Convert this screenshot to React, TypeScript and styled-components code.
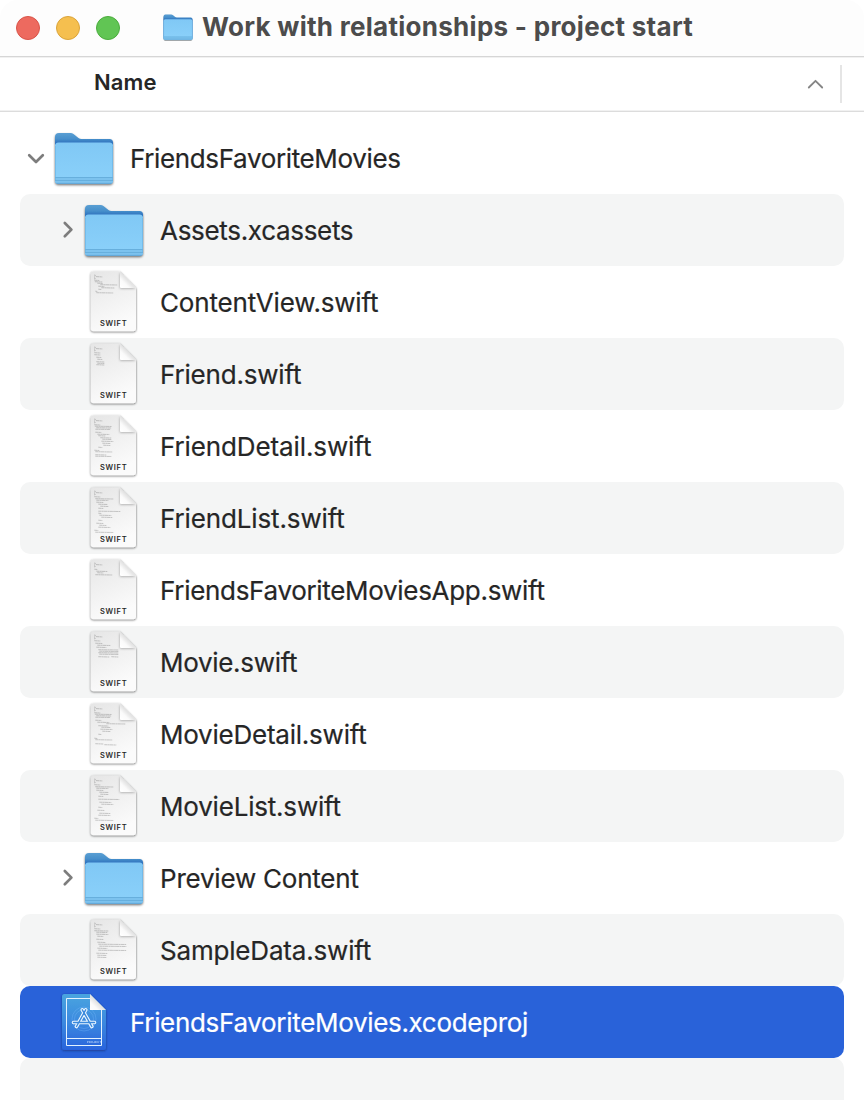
import React from "react";
import styled, { createGlobalStyle } from "styled-components";

const GlobalStyle = createGlobalStyle`
  * { box-sizing: border-box; }
  body { margin: 0; background: #fff; font-family: Inter, "Liberation Sans", sans-serif; }
`;

const Window = styled.main`
  width: 864px;
  height: 1100px;
  overflow: hidden;
  background: #fff;
`;

const TitleBar = styled.header`
  display: flex;
  align-items: center;
  height: 57px;
  padding: 0 16px 1px;
  background: #fdfdfd;
  border-bottom: 1px solid #d6d6d6;
  border-radius: 18px 18px 0 0;
`;

const Lights = styled.div`
  display: flex;
  gap: 16px;
  margin-right: 43px;
`;

const Light = styled.span<{ $fill: string; $edge: string }>`
  width: 24px;
  height: 24px;
  border-radius: 50%;
  background: ${(p) => p.$fill};
  border: 1px solid ${(p) => p.$edge};
`;

const TitleIcon = styled.span`
  display: flex;
  padding-bottom: 2px;
`;

const Title = styled.h1<{ $spacing: number }>`
  margin: 0 0 0 9px;
  padding-bottom: 2px;
  font-size: 26px;
  line-height: 32px;
  font-weight: 700;
  letter-spacing: ${(p) => p.$spacing}px;
  color: #4c4c4c;
  white-space: nowrap;
`;

const ColumnHeader = styled.div`
  display: flex;
  align-items: center;
  height: 55px;
  padding: 0 22px 1px 94px;
  border-top: 1px solid #f1f1f1;
  border-bottom: 1px solid #dcdcdc;
  box-shadow: inset 0 -1px #f1f1f1;
`;

const ColumnName = styled.span`
  flex: 1;
  padding-bottom: 4px;
  font-size: 22px;
  line-height: 28px;
  font-weight: 600;
  letter-spacing: 0.1px;
  color: #262626;
`;

const Divider = styled.span`
  width: 2px;
  height: 38px;
  margin-left: 15px;
  background: #e5e5e5;
`;

const List = styled.div`
  padding: 10px 20px 0;
`;

const Row = styled.div<{ $depth: number; $tone: "plain" | "stripe" | "selected" }>`
  display: flex;
  align-items: center;
  height: 72px;
  padding-left: ${(p) => p.$depth * 30}px;
  border-radius: 10px;
  color: ${(p) => (p.$tone === "selected" ? "#fff" : "#262626")};
  background: ${(p) => ({ plain: "transparent", stripe: "#f4f5f5", selected: "#2962d9" })[p.$tone]};
`;

const Disclosure = styled.span`
  display: flex;
  width: 34px;
  padding-left: 6px;
`;

const FileName = styled.span<{ $spacing: number }>`
  margin-left: 16px;
  padding-top: 2px;
  font-size: 26px;
  line-height: 32px;
  letter-spacing: ${(p) => p.$spacing}px;
  -webkit-text-stroke: 0.2px currentColor;
  white-space: nowrap;
`;

const Drawing = styled.svg`
  display: block;
  flex: none;
  overflow: visible;
`;

const Chevron = ({ open }: { open: boolean }) => (
  <Drawing width="24" height="24" viewBox="0 0 24 24" fill="none" stroke="#7d7d7d" strokeWidth="2.7" strokeLinecap="round" strokeLinejoin="round">
    <path d={open ? "M3.2 9.2L10 16l6.800-6.800" : "M8.800 5L15.400 11.600l-6.600 6.600"} />
  </Drawing>
);

const SortArrow = () => (
  <Drawing width="18" height="12" viewBox="0 0 18 12" fill="none" stroke="#858585" strokeWidth="1.8" strokeLinecap="round" strokeLinejoin="round">
    <path d="M1.800 9.500L8.500 2.800l6.700 6.700" />
  </Drawing>
);

const Folder = ({ small = false }: { small?: boolean }) => (
  <Drawing width={small ? 30 : 60} height={small ? 28 : 56} viewBox="0 0 60 56">
    <defs>
      <linearGradient id="folderBack" gradientUnits="userSpaceOnUse" x1="0" y1="3" x2="0" y2="13">
        <stop offset="0" stopColor="#5a9fd3" />
        <stop offset=".6" stopColor="#468fcb" />
        <stop offset="1" stopColor="#2f72be" />
      </linearGradient>
      <linearGradient id="folderFront" x1="0" y1="0" x2="0" y2="1">
        <stop offset="0" stopColor="#80c8f5" />
        <stop offset="1" stopColor="#8bd1fa" />
      </linearGradient>
      <filter id="folderShadow" x="-10%" y="-10%" width="120%" height="125%">
        <feDropShadow dx="0" dy="1.500" stdDeviation=".8" floodColor="#000" floodOpacity=".6" />
      </filter>
    </defs>
    <path filter="url(#folderShadow)" d="M1 7a4 4 0 0 1 4-4h11.500c4.500 0 6.500 6 11 6H55.500a3.500 3.500 0 0 1 3.500 3.500V50a3.500 3.500 0 0 1-3.500 3.500h-51A3.500 3.500 0 0 1 1 50z" fill="url(#folderBack)" />
    <path d="M1 16a3.500 3.500 0 0 1 3.500-3.500h51A3.500 3.500 0 0 1 59 16v34.300a3.500 3.500 0 0 1-3.500 3.500h-51A3.500 3.500 0 0 1 1 50.300z" fill="url(#folderFront)" />
    <path d="M1 47h58v3.300a3.500 3.500 0 0 1-3.500 3.500h-51A3.500 3.500 0 0 1 1 50.300z" fill="#7cc2ee" />
    <path d="M1 47.500h58M1 50.500h58" stroke="#62a9d8" strokeWidth=".8" />
    <path d="M2.500 53.400h55" stroke="#5a9fd0" strokeWidth=".8" />
    <path d="M1.500 16v34M58.500 16v34" stroke="#68b1e1" strokeWidth=".9" opacity=".7" />
  </Drawing>
);

/* Each entry is [x, y, width] of one line in the page preview. */
type CodeLine = [number, number, number];

const head: CodeLine[] = [[10.5, 5, 1], [11.5, 6.400, 6.500], [10.3, 8, 1]];
const previews: Record<string, CodeLine[]> = {
  content: [...head, [10, 10, 5], [10.500, 11.500, 7.500], [13, 13, 5.500], [16, 14.500, 17], [14, 16, 6], [17, 17.500, 13], [14, 19, 3], [11, 21, 2], [12, 22.500, 17]],
  friend: [...head, [10, 10.500, 6], [10, 12.500, 6], [12, 15, 5], [13, 17, 5], [12, 19.500, 8], [13, 21, 7], [12, 22.500, 8]],
  friendDetail: [...head, [10, 10.500, 6], [10.500, 12, 17], [12, 13.500, 15], [11, 15, 15], [11, 18, 6], [13, 20, 12], [14, 21.500, 7], [16, 23.500, 11], [18, 25, 9], [17, 27, 12], [18, 29, 8], [19, 31, 7], [14, 33, 4], [10, 36, 5], [11, 37.500, 17], [11, 40.500, 11], [11, 42, 16]],
  friendList: [...head, [10, 10.500, 6], [11, 12.500, 18], [12, 14, 12], [12, 16, 7], [14, 18, 9], [16, 20, 8], [14, 22, 5], [14, 25, 22], [14, 27, 3], [15, 29, 12], [17, 31, 11], [14, 34, 4], [12, 37, 7], [15, 39, 7], [14, 41, 12], [10, 44, 4], [11, 46, 18]],
  app: [...head, [10, 11, 3], [12, 13, 11], [13, 14.500, 6], [11, 16.500, 17]],
  movie: [...head, [10, 10.500, 6], [11, 13, 7], [13, 15, 13], [12, 17, 10], [14, 19.500, 20], [15, 21, 19], [14, 22.500, 20], [15, 24, 19], [14, 26.500, 11], [27, 26.500, 7]],
  movieDetail: [...head, [10, 10.500, 6], [10.500, 12, 17], [12, 13.500, 15], [11, 15, 15], [11, 18, 6], [13, 20, 12], [22, 21.500, 19], [14, 23.500, 10], [17, 25, 9], [16, 27, 12], [18, 29, 8], [14, 32, 3], [10, 36, 3], [11, 37.500, 17], [11, 41.500, 8], [20, 42.500, 12]],
  movieList: [...head, [10, 10.500, 6], [11, 12.500, 18], [12, 14, 12], [12, 16, 7], [15, 18, 9], [16, 20, 8], [14, 22, 5], [14, 25, 21], [15, 28, 12], [17, 30, 12], [14, 33, 4], [13, 36, 7], [15, 39, 11], [14, 41, 12], [10, 44, 4], [11, 46, 18]],
  sample: [...head, [10, 10.500, 6], [10, 12.500, 14], [12, 14, 11], [12, 16, 12], [13, 18, 6], [12, 21, 7], [13, 24, 8], [14, 26, 28], [15, 28, 27], [13, 30, 10], [14, 32, 28], [12, 35, 11], [13, 37, 9], [13, 39, 9]],
};

const SwiftPage = ({ preview }: { preview: string }) => (
  <Drawing width="60" height="64" viewBox="0 0 60 64">
    <defs>
      <linearGradient id="page" x1="0" y1="0" x2=".35" y2="1">
        <stop offset="0" stopColor="#e6e6e6" />
        <stop offset="1" stopColor="#fbfbfb" />
      </linearGradient>
      <linearGradient id="fold" gradientUnits="userSpaceOnUse" x1="37" y1="17" x2="44.500" y2="9.500">
        <stop offset="0" stopColor="#fff" />
        <stop offset=".5" stopColor="#fafafa" />
        <stop offset="1" stopColor="#dedede" />
      </linearGradient>
      <filter id="pageShadow" x="-20%" y="-20%" width="140%" height="140%">
        <feDropShadow dx="0" dy=".7" stdDeviation=".9" floodColor="#000" floodOpacity=".65" />
      </filter>
      <filter id="foldShadow" x="-30%" y="-30%" width="160%" height="160%">
        <feDropShadow dx="-.3" dy=".8" stdDeviation="1.200" floodColor="#000" floodOpacity=".28" />
      </filter>
      <clipPath id="pageClip">
        <path d="M9.500 1.800H36L52 18v40.500a2.700 2.700 0 0 1-2.700 2.700H9.500a2.700 2.700 0 0 1-2.700-2.700v-54a2.700 2.700 0 0 1 2.700-2.700z" />
      </clipPath>
    </defs>
    <path filter="url(#pageShadow)" d="M9.500 1.800H36L52 18v40.500a2.700 2.700 0 0 1-2.700 2.700H9.500a2.700 2.700 0 0 1-2.700-2.700v-54a2.700 2.700 0 0 1 2.700-2.700z" fill="url(#page)" />
    <path d="M10.300 4.500v5" stroke="#888" strokeWidth=".6" opacity=".5" />
    <g clipPath="url(#pageClip)">
      {previews[preview].map(([x, y, w], i) => (
        <path key={i} d={`M${x + 0.3} ${y + 0.2}l${w} .3`} stroke="#777" strokeWidth=".85" strokeDasharray="3.400 .3 1.700 .2" opacity=".45" />
      ))}
      <path filter="url(#foldShadow)" d="M36 1.800V16.500a1.500 1.500 0 0 0 1.500 1.500H52z" fill="url(#fold)" />
    </g>
    <text x="29.700" y="56" textAnchor="middle" fontFamily="Inter, sans-serif" fontSize="7.500" fontWeight="500" letterSpacing=".72" fill="#222" stroke="#222" strokeWidth=".1">SWIFT</text>
  </Drawing>
);

const XcodeProject = () => (
  <Drawing width="60" height="64" viewBox="0 0 60 64">
    <defs>
      <linearGradient id="project" x1="0" y1="0" x2="0" y2="1">
        <stop offset="0" stopColor="#49a5df" />
        <stop offset=".55" stopColor="#3a86df" />
        <stop offset="1" stopColor="#2863dc" />
      </linearGradient>
      <linearGradient id="projectFold" gradientUnits="userSpaceOnUse" x1="36" y1="20" x2="44" y2="12">
        <stop offset="0" stopColor="#fff" />
        <stop offset=".5" stopColor="#fafafa" />
        <stop offset="1" stopColor="#dedede" />
      </linearGradient>
      <filter id="projectShadow" x="-20%" y="-20%" width="140%" height="140%">
        <feDropShadow dx="0" dy=".8" stdDeviation=".8" floodColor="#071d55" floodOpacity=".6" />
      </filter>
    </defs>
    <path filter="url(#projectShadow)" d="M10.500 4H36l16 16v37.500a2.500 2.500 0 0 1-2.500 2.500h-39A2.500 2.500 0 0 1 8 57.500v-51A2.500 2.500 0 0 1 10.500 4z" fill="url(#project)" />
    <path d="M36 8.500H12.500V55.500h35V20M12.500 48.500h35" fill="none" stroke="#e3f2ff" strokeWidth="1" />
    <g fill="none" stroke="#7fbfff" strokeWidth=".6" opacity=".5">
      <circle cx="30" cy="29" r="9.500" />
      <circle cx="30" cy="29" r="12" />
    </g>
    <g fill="none" strokeLinecap="round">
      <g stroke="#edf7ff" strokeWidth="3.600">
        <path d="M19.500 32.500h21M31.700 19.800L22.500 36.500M28.300 19.800L37.800 36.500" />
      </g>
      <g stroke="#3b89dc" strokeWidth="1.400">
        <path d="M19.500 32.500h21M31.700 19.800L22.500 36.500M28.300 19.800L37.800 36.500" />
      </g>
    </g>
    <path d="M36 4l16 16H36z" fill="url(#projectFold)" />
    <text x="33" y="53" fontFamily="Inter, sans-serif" fontSize="2.500" fontWeight="700" letterSpacing=".4" fill="#d7e9ff" opacity=".85">PROJECT</text>
  </Drawing>
);

interface Entry {
  name: string;
  depth: number;
  kind: "folder" | "swift" | "project";
  open?: boolean;
  preview?: string;
  spacing: number;
}

const entries: Entry[] = [
  { name: "FriendsFavoriteMovies", depth: 0, kind: "folder", open: true, spacing: -0.36 },
  { name: "Assets.xcassets", depth: 1, kind: "folder", open: false, spacing: -0.31 },
  { name: "ContentView.swift", depth: 1, kind: "swift", preview: "content", spacing: -0.17 },
  { name: "Friend.swift", depth: 1, kind: "swift", preview: "friend", spacing: -0.19 },
  { name: "FriendDetail.swift", depth: 1, kind: "swift", preview: "friendDetail", spacing: -0.11 },
  { name: "FriendList.swift", depth: 1, kind: "swift", preview: "friendList", spacing: -0.13 },
  { name: "FriendsFavoriteMoviesApp.swift", depth: 1, kind: "swift", preview: "app", spacing: -0.31 },
  { name: "Movie.swift", depth: 1, kind: "swift", preview: "movie", spacing: -0.31 },
  { name: "MovieDetail.swift", depth: 1, kind: "swift", preview: "movieDetail", spacing: -0.23 },
  { name: "MovieList.swift", depth: 1, kind: "swift", preview: "movieList", spacing: -0.2 },
  { name: "Preview Content", depth: 1, kind: "folder", open: false, spacing: -0.22 },
  { name: "SampleData.swift", depth: 1, kind: "swift", preview: "sample", spacing: -0.18 },
  { name: "FriendsFavoriteMovies.xcodeproj", depth: 0, kind: "project", spacing: -0.32 },
];

export default function App() {
  return (
    <>
      <GlobalStyle />
      <Window>
        <TitleBar>
          <Lights>
            <Light $fill="#ed6a5f" $edge="#d95449" />
            <Light $fill="#f5bf4f" $edge="#dba43a" />
            <Light $fill="#61c554" $edge="#4bad3d" />
          </Lights>
          <TitleIcon>
            <Folder small />
          </TitleIcon>
          <Title $spacing={0.28}>Work with relationships - project start</Title>
        </TitleBar>
        <ColumnHeader>
          <ColumnName>Name</ColumnName>
          <SortArrow />
          <Divider />
        </ColumnHeader>
        <List>
          {entries.map((e, i) => (
            <Row key={e.name} $depth={e.depth} $tone={e.kind === "project" ? "selected" : i % 2 ? "stripe" : "plain"}>
              <Disclosure>{e.open !== undefined && <Chevron open={e.open} />}</Disclosure>
              {e.kind === "folder" && <Folder />}
              {e.kind === "swift" && <SwiftPage preview={e.preview!} />}
              {e.kind === "project" && <XcodeProject />}
              <FileName $spacing={e.spacing}>{e.name}</FileName>
            </Row>
          ))}
          <Row $depth={0} $tone="stripe" />
        </List>
      </Window>
    </>
  );
}
